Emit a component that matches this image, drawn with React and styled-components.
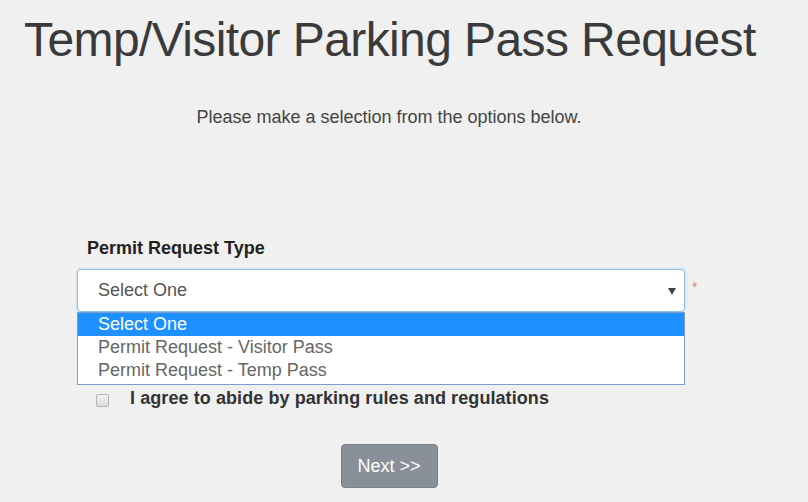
import styled, { createGlobalStyle } from "styled-components";

const GlobalStyle = createGlobalStyle`
  html, body {
    margin: 0;
    padding: 0;
    background: #f0f0f0;
  }
  body {
    font-family: "Liberation Sans", Arial, sans-serif;
    color: #333;
  }
`;

const Page = styled.div`
  width: 808px;
  height: 502px;
  overflow: hidden;
  background: #f0f0f0;
`;

const Title = styled.h1`
  margin: 0;
  padding: 14px 0 0 24px;
  font-size: 48px;
  font-weight: 400;
  line-height: 52px;
  color: #3a3a3a;
  letter-spacing: -0.6px;
`;

const Intro = styled.p`
  margin: 41px 0 0;
  padding-right: 30px;
  text-align: center;
  font-size: 18px;
  line-height: 20px;
  color: #444;
`;

const Form = styled.div`
  margin: 111px 0 0 77px;
  width: 640px;
`;

const Label = styled.div`
  padding-left: 10px;
  font-size: 18px;
  font-weight: 700;
  line-height: 20px;
  color: #222;
`;

const FieldRow = styled.div`
  margin-top: 11px;
  display: flex;
  align-items: flex-start;
  position: relative;
`;

const SelectBox = styled.div`
  position: relative;
  box-sizing: border-box;
  width: 608px;
  height: 43px;
  display: flex;
  align-items: center;
  justify-content: space-between;
  padding: 0 8px 0 20px;
  background: #fff;
  border: 1px solid #8fbfe6;
  border-radius: 4px;
  box-shadow: 0 0 3px rgba(102, 175, 233, 0.45);
  font-size: 18px;
  color: #555;
`;

const Arrow = styled.span`
  width: 0;
  height: 0;
  border-left: 4px solid transparent;
  border-right: 4px solid transparent;
  border-top: 7px solid #444;
  margin-top: 2px;
`;

const Required = styled.span`
  margin: 10px 0 0 7px;
  color: #d9534f;
  font-size: 14px;
  opacity: 0.7;
`;

const ListBox = styled.ul`
  position: absolute;
  top: 43px;
  left: 0;
  box-sizing: border-box;
  width: 608px;
  margin: 0;
  padding: 0 0 2px;
  list-style: none;
  background: #fff;
  border: 1px solid #7f9bcb;
  z-index: 2;
`;

const Option = styled.li`
  height: 23px;
  line-height: 23px;
  padding-left: 20px;
  font-size: 18px;
  background: ${(p) => (p.$active ? "#1e90ff" : "transparent")};
  color: ${(p) => (p.$active ? "#fff" : "#666")};
`;

const CheckRow = styled.label`
  margin-top: 76px;
  display: flex;
  align-items: center;
  padding-left: 19px;
`;

const Box = styled.span`
  box-sizing: border-box;
  width: 13px;
  height: 13px;
  border: 1px solid #b5b5b5;
  border-radius: 2px;
  background: linear-gradient(#f4f4f4, #dcdcdc);
  margin-top: 3px;
`;

const CheckText = styled.span`
  margin-left: 21px;
  font-size: 18px;
  font-weight: 700;
  color: #333;
  letter-spacing: 0.08px;
`;

const Actions = styled.div`
  margin-top: 35px;
  display: flex;
  justify-content: center;
  width: 624px;
`;

const Button = styled.button`
  box-sizing: border-box;
  width: 97px;
  height: 44px;
  background: #8a9099;
  border: 1px solid #7a8089;
  border-radius: 4px;
  color: #fff;
  font-family: "Liberation Sans", Arial, sans-serif;
  font-size: 18px;
  padding: 0;
`;

export default function App() {
  const options = [
    "Select One",
    "Permit Request - Visitor Pass",
    "Permit Request - Temp Pass",
  ];
  return (
    <Page>
      <GlobalStyle />
      <Title>Temp/Visitor Parking Pass Request</Title>
      <Intro>Please make a selection from the options below.</Intro>
      <Form>
        <Label>Permit Request Type</Label>
        <FieldRow>
          <SelectBox>
            <span>Select One</span>
            <Arrow />
          </SelectBox>
          <Required>*</Required>
          <ListBox>
            {options.map((o, i) => (
              <Option key={o} $active={i === 0}>
                {o}
              </Option>
            ))}
          </ListBox>
        </FieldRow>
        <CheckRow>
          <Box />
          <CheckText>I agree to abide by parking rules and regulations</CheckText>
        </CheckRow>
        <Actions>
          <Button>Next &gt;&gt;</Button>
        </Actions>
      </Form>
    </Page>
  );
}
